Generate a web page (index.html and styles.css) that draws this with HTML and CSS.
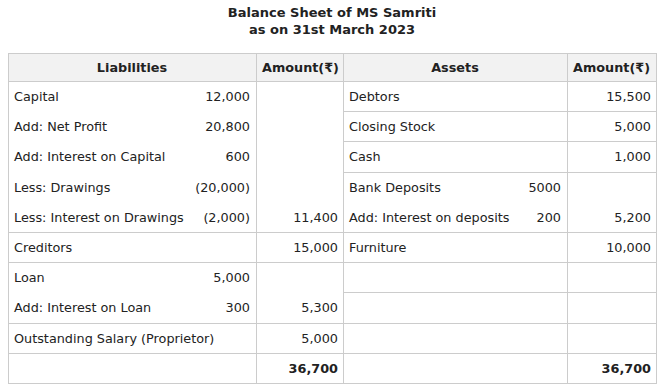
FILE: index.html
```html
<!DOCTYPE html>
<html>
<head>
<meta charset="utf-8">
<link rel="stylesheet" href="styles.css">
</head>
<body>
<div class="page">
  <div class="title">Balance Sheet of MS Samriti<br>as on 31st March 2023</div>
  <table class="sheet">
    <colgroup>
      <col class="c1"><col class="c2"><col class="c3"><col class="c4">
    </colgroup>
    <thead>
      <tr><th>Liabilities</th><th>Amount(₹)</th><th>Assets</th><th>Amount(₹)</th></tr>
    </thead>
    <tbody>
      <tr>
        <td rowspan="5" class="grp">
          <div class="line"><span>Capital</span><span>12,000</span></div>
          <div class="line"><span>Add: Net Profit</span><span>20,800</span></div>
          <div class="line"><span>Add: Interest on Capital</span><span>600</span></div>
          <div class="line"><span>Less: Drawings</span><span>(20,000)</span></div>
          <div class="line"><span>Less: Interest on Drawings</span><span>(2,000)</span></div>
        </td>
        <td rowspan="5" class="num bottom">11,400</td>
        <td>Debtors</td>
        <td class="num">15,500</td>
      </tr>
      <tr><td>Closing Stock</td><td class="num">5,000</td></tr>
      <tr><td>Cash</td><td class="num">1,000</td></tr>
      <tr>
        <td rowspan="2" class="grp">
          <div class="line"><span>Bank Deposits</span><span>5000</span></div>
          <div class="line"><span>Add: Interest on deposits</span><span>200</span></div>
        </td>
        <td rowspan="2" class="num bottom">5,200</td>
      </tr>
      <tr></tr>
      <tr><td>Creditors</td><td class="num">15,000</td><td>Furniture</td><td class="num">10,000</td></tr>
      <tr>
        <td rowspan="2" class="grp">
          <div class="line"><span>Loan</span><span>5,000</span></div>
          <div class="line"><span>Add: Interest on Loan</span><span>300</span></div>
        </td>
        <td rowspan="2" class="num bottom">5,300</td>
        <td></td><td></td>
      </tr>
      <tr><td></td><td></td></tr>
      <tr><td>Outstanding Salary (Proprietor)</td><td class="num">5,000</td><td></td><td></td></tr>
      <tr class="total"><td></td><td class="num">36,700</td><td></td><td class="num">36,700</td></tr>
    </tbody>
  </table>
</div>
</body>
</html>
```

FILE: styles.css
```css
html, body {
  margin: 0;
  padding: 0;
  background: #ffffff;
}

body {
  font-family: "DejaVu Sans", sans-serif;
  font-size: 12.8px;
  color: #222222;
}

.page {
  padding: 4px 0 0 8px;
}

.title {
  width: 648px;
  text-align: center;
  font-weight: bold;
  font-size: 13px;
  line-height: 17px;
  margin-bottom: 15px;
}

.sheet {
  width: 648px;
  border-collapse: collapse;
  table-layout: fixed;
}

.c1 { width: 248px; }
.c2 { width: 87px; }
.c3 { width: 224px; }
.c4 { width: 89px; }

.sheet th,
.sheet td {
  border: 1px solid #cccccc;
  padding: 0 6px 0 5px;
  line-height: 29.2px;
  height: 29.2px;
  vertical-align: middle;
  text-align: left;
}

.sheet th {
  background: #f2f2f2;
  text-align: center;
  font-weight: bold;
  height: 27px;
  line-height: 27px;
}

.sheet td.num {
  text-align: right;
  padding-right: 5px;
}

.sheet td.bottom {
  vertical-align: bottom;
}

.sheet td.grp {
  padding-top: 0;
  padding-bottom: 0;
  vertical-align: top;
}

.line {
  display: flex;
  justify-content: space-between;
  height: 30.2px;
  line-height: 30.2px;
}

.line:last-child {
  height: 29.2px;
  line-height: 29.2px;
}

.total td {
  font-weight: bold;
}
```
